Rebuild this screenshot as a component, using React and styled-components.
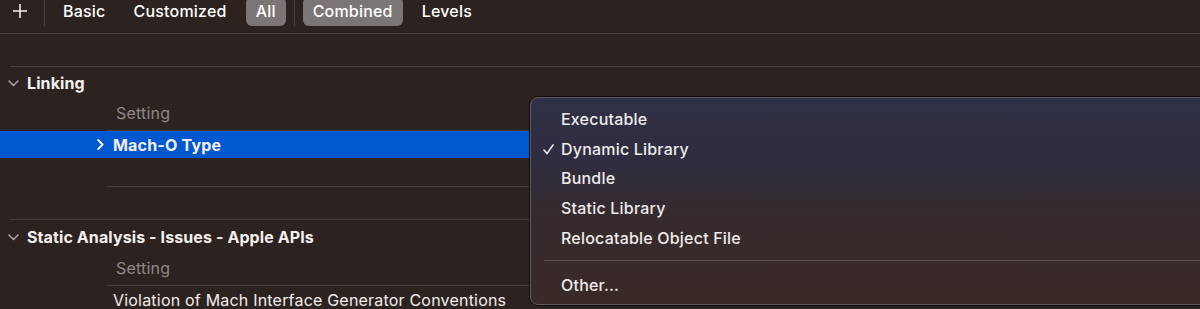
import React from "react";
import styled, { createGlobalStyle } from "styled-components";

const GlobalStyle = createGlobalStyle`
  html, body {
    margin: 0;
    padding: 0;
    background: #2c2220;
    overflow: hidden;
  }
  body {
    font-family: Inter, "Noto Sans", "Liberation Sans", sans-serif;
    color: #f2eeee;
    -webkit-font-smoothing: antialiased;
  }
`;

const Page = styled.div`
  position: relative;
  width: 1200px;
  height: 309px;
  overflow: hidden;
`;

const Toolbar = styled.div`
  display: flex;
  align-items: center;
  height: 37px;
  margin-top: -3px;
  padding-bottom: 8px;
  box-sizing: border-box;
  border-bottom: 1px solid #4a403d;
`;

const PlusButton = styled.div`
  width: 14px;
  height: 14px;
  margin-left: 13px;
  margin-right: 17px;
  display: flex;
`;

const Divider = styled.div`
  width: 1px;
  height: 29px;
  align-self: flex-start;
  background: #4a403d;
  margin: 0 ${(p) => p.$gap || 9}px 0 0;
`;

const Tab = styled.div`
  height: 29px;
  display: flex;
  align-items: center;
  padding: 0 ${(p) => (p.$active ? 10 : 9)}px;
  margin-right: ${(p) => p.$mr ?? 10}px;
  border-radius: 6px;
  font-size: 16px;
  font-weight: 500;
  letter-spacing: 0.2px;
  color: #ffffff;
  background: ${(p) => (p.$active ? "#7b7675" : "transparent")};
`;

const Spacer = styled.div`
  height: ${(p) => p.$h}px;
`;

const Section = styled.div`
  margin-left: 10px;
  border-top: 1px solid #463c3a;
`;

const GroupHeader = styled.div`
  height: ${(p) => p.$h || 32}px;
  margin-left: -10px;
  display: flex;
  align-items: center;
  gap: 8px;
  padding-left: 8px;
  font-size: 16px;
  font-weight: 700;
  letter-spacing: 0.1px;
  color: #f4f0ef;
`;

const ColumnHead = styled.div`
  height: 32px;
  margin-left: 97px;
  padding: 0 0 3px 9px;
  display: flex;
  align-items: center;
  box-sizing: border-box;
  border-bottom: 1px solid #463c3a;
  font-size: 16px;
  letter-spacing: 0.2px;
  color: #8e8886;
`;

const Row = styled.div`
  height: ${(p) => p.$h || 28}px;
  display: flex;
  align-items: center;
  box-sizing: border-box;
  margin-left: -10px;
  padding-left: ${(p) => (p.$chevron ? 97 : 113)}px;
  gap: 9px;
  font-size: 16px;
  letter-spacing: 0.2px;
  font-weight: ${(p) => (p.$selected ? 700 : 400)};
  color: #f2eeed;
  background: ${(p) => (p.$selected ? "#0058d0" : "transparent")};
  border-bottom: ${(p) => (p.$line ? "1px solid #463c3a" : "none")};
  ${(p) => (p.$line ? "margin-left: 97px; padding-left: 16px;" : "")}
`;

const Menu = styled.div`
  position: absolute;
  left: 530px;
  top: 97px;
  width: 700px;
  height: 208px;
  box-sizing: border-box;
  padding: 6px 0 0 0;
  border-radius: 8px;
  border: 1px solid #5f5a5f;
  box-shadow: 0 0 0 1px #120e0d;
  background: linear-gradient(180deg, #2f3047 0%, #2f2d3f 30%, #362a2c 60%, #382a27 100%);
`;

const MenuItem = styled.div`
  height: 29.8px;
  display: flex;
  align-items: center;
  padding-left: 30px;
  position: relative;
  font-size: 16px;
  font-weight: 500;
  letter-spacing: 0.2px;
  color: #efebeb;
`;

const Check = styled.span`
  position: absolute;
  left: 12px;
  top: 50%;
  margin-top: -5px;
  display: flex;
`;

const MenuSeparator = styled.div`
  height: 1px;
  background: #5a5050;
  margin: 7px 0 9px 13px;
`;

const ChevronDown = () => (
  <svg width="11" height="7" viewBox="0 0 11 7">
    <polyline points="1,1 5.5,5.5 10,1" fill="none" stroke="#a9a3a1" strokeWidth="1.5" strokeLinecap="round" strokeLinejoin="round" />
  </svg>
);

const ChevronRight = () => (
  <svg width="7" height="11" viewBox="0 0 7 11">
    <polyline points="1.2,1 5.6,5.5 1.2,10" fill="none" stroke="#ffffff" strokeWidth="1.8" strokeLinecap="round" strokeLinejoin="round" />
  </svg>
);

const Plus = () => (
  <svg width="14" height="14" viewBox="0 0 14 14">
    <path d="M7 0.5V13.5M0.5 7H13.5" stroke="#f0ecec" strokeWidth="1.6" strokeLinecap="round" />
  </svg>
);

const CheckMark = () => (
  <svg width="11" height="11" viewBox="0 0 11 11">
    <polyline points="1,6 4,9.6 10,1" fill="none" stroke="#efebeb" strokeWidth="1.6" strokeLinecap="round" strokeLinejoin="round" />
  </svg>
);

const menuItems = ["Executable", "Dynamic Library", "Bundle", "Static Library", "Relocatable Object File"];

export default function App() {
  return (
    <Page>
      <GlobalStyle />
      <Toolbar>
        <PlusButton>
          <Plus />
        </PlusButton>
        <Divider $gap={9} />
        <Tab>Basic</Tab>
        <Tab>Customized</Tab>
        <Tab $active $mr={8}>All</Tab>
        <Divider $gap={8} />
        <Tab $active>Combined</Tab>
        <Tab>Levels</Tab>
      </Toolbar>

      <Spacer $h={32} />

      <Section>
        <GroupHeader>
          <ChevronDown />
          Linking
        </GroupHeader>
        <ColumnHead>Setting</ColumnHead>
        <Row $selected $chevron $h={27}>
          <ChevronRight />
          Mach-O Type
        </Row>
        <Row $line $h={29} />
        <Spacer $h={32} />
      </Section>

      <Section>
        <GroupHeader $h={34}>
          <ChevronDown />
          Static Analysis - Issues - Apple APIs
        </GroupHeader>
        <ColumnHead>Setting</ColumnHead>
        <Row>Violation of Mach Interface Generator Conventions</Row>
      </Section>

      <Menu>
        {menuItems.map((item) => (
          <MenuItem key={item}>
            {item === "Dynamic Library" && (
              <Check>
                <CheckMark />
              </Check>
            )}
            {item}
          </MenuItem>
        ))}
        <MenuSeparator />
        <MenuItem>Other...</MenuItem>
      </Menu>
    </Page>
  );
}
